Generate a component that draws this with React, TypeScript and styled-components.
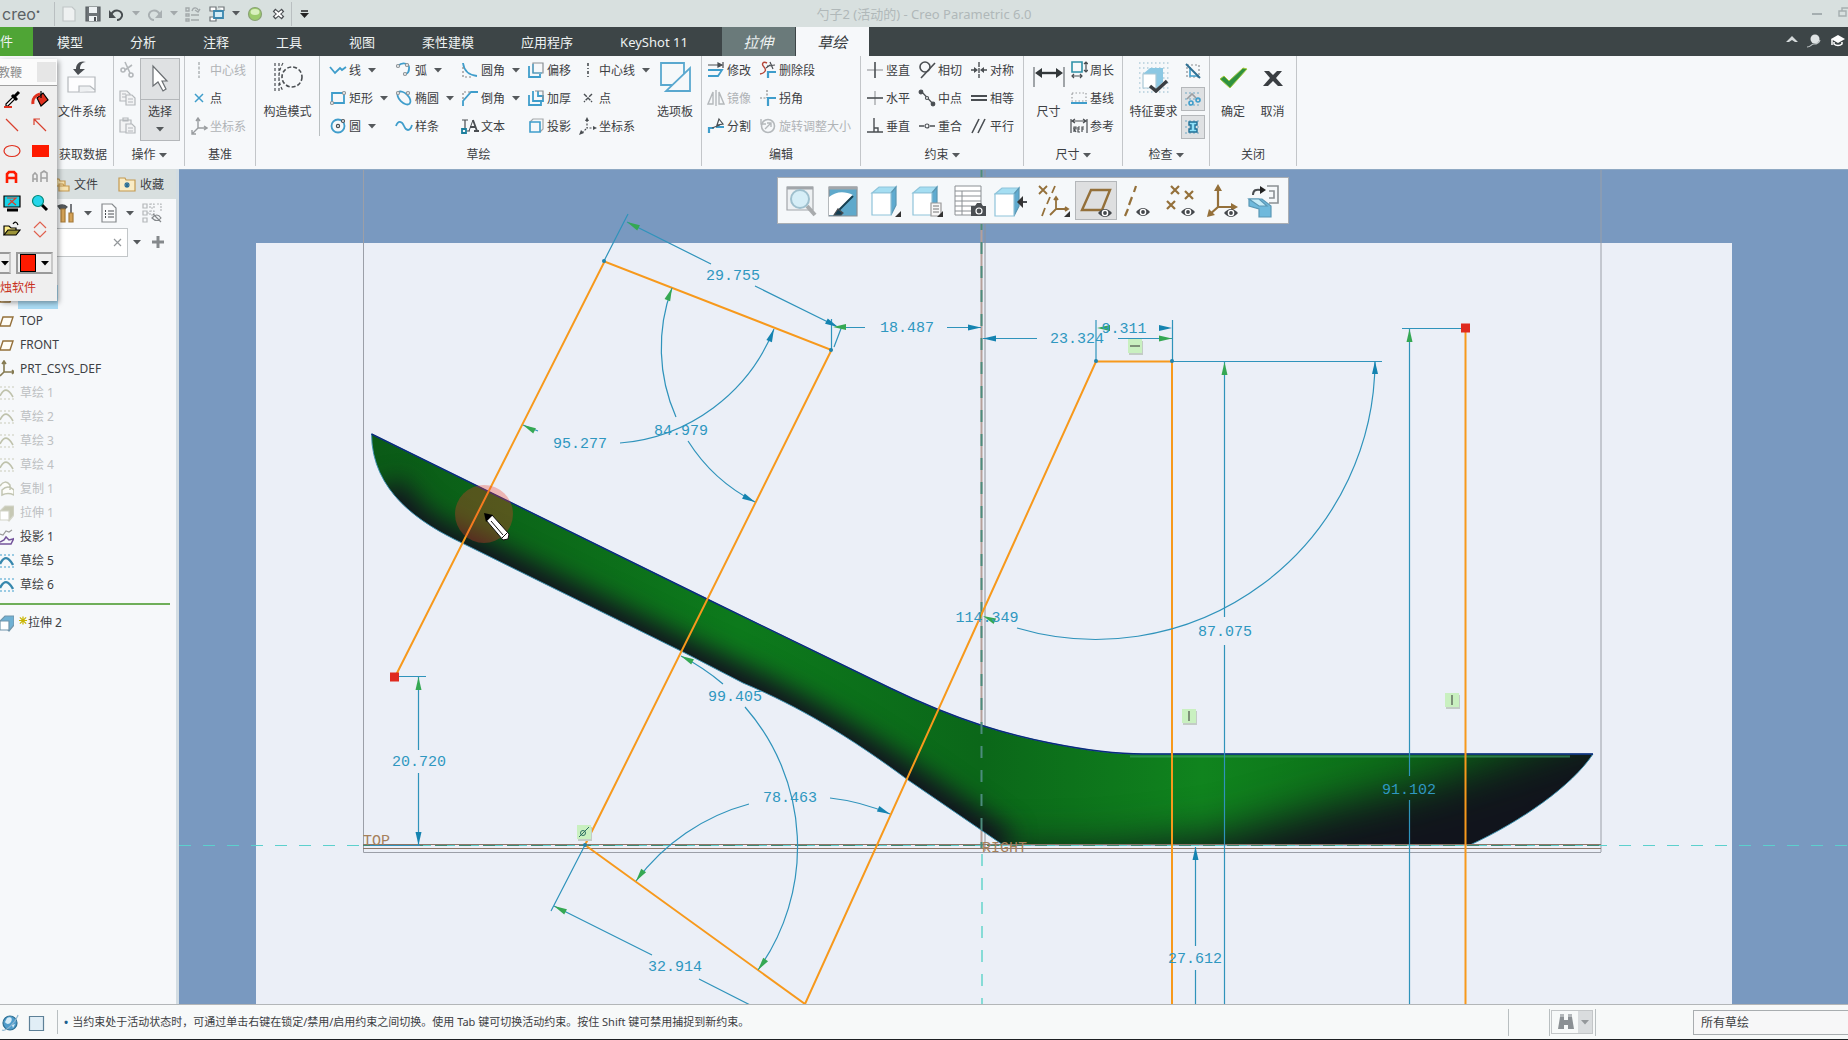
import React from "react";
import styled, { createGlobalStyle, css } from "styled-components";

const Global = createGlobalStyle`
  * { box-sizing: border-box; }
  body { margin: 0; overflow: hidden; }
  body, button, input, select {
    font-family: "Noto Sans", "Noto Sans CJK SC", sans-serif;
    font-size: 12px;
    color: #3d4043;
  }
  button { border: 0; padding: 0; background: none; }
`;

const INK = "#4a4e52";
const BLUE = "#3f9dcb";
const PALE = "#b4b8bb";
const GOLD = "#94703a";

/* ---------- shell ---------- */

const Shell = styled.div`
  display: flex;
  flex-direction: column;
  height: 100vh;
  overflow: hidden;
  background: #f6f8fa;
`;

const TitleBar = styled.header`
  display: grid;
  grid-template-columns: 1fr auto 1fr;
  align-items: center;
  flex: none;
  height: 27px;
  background: #d8e0df;
`;

const QuickBar = styled.div`
  display: flex;
  align-items: center;
  height: 27px;
`;

const Brand = styled.span`
  width: 54px;
  padding-left: 2px;
  font-family: Inter, sans-serif;
  font-size: 16px;
  line-height: 20px;
  color: #5b6265;
  sup { font-size: 8px; line-height: 8px; }
`;

const QuickButton = styled.button<{ $w?: number }>`
  display: flex;
  align-items: center;
  justify-content: center;
  width: ${(p) => p.$w ?? 24}px;
  height: 24px;
`;

const Rule = styled.span<{ $h?: number; $after?: number }>`
  flex: none;
  width: 1px;
  height: ${(p) => p.$h ?? 24}px;
  margin-right: ${(p) => p.$after ?? 0}px;
  background: #b9bfc1;
`;

const WindowTitle = styled.h1`
  margin: 0;
  font-size: 13px;
  line-height: 20px;
  font-weight: 400;
  color: #b0b8b9;
`;

const WindowButtons = styled.div`
  display: flex;
  justify-content: flex-end;
  gap: 16px;
  overflow: hidden;
`;

/* ---------- tabs ---------- */

const TabBar = styled.nav`
  display: flex;
  align-items: stretch;
  flex: none;
  gap: 1px;
  height: 29px;
  background: #3d4547;
`;

const Tab = styled.button<{ $kind?: "file" | "context" | "active" }>`
  flex: none;
  padding: 0 23px;
  font-size: 13px;
  line-height: 20px;
  white-space: nowrap;
  color: #eef2f2;
  ${(p) =>
    p.$kind === "file" &&
    css`
      display: flex;
      justify-content: flex-end;
      width: 33px;
      padding: 4px 20px 0 0;
      overflow: hidden;
      background: #4fa535;
    `}
  ${(p) =>
    p.$kind === "context" &&
    css`
      width: 73px;
      padding: 0;
      margin-left: 10px;
      font-size: 15px;
      font-style: italic;
      background: #6a7a7a;
    `}
  ${(p) =>
    p.$kind === "active" &&
    css`
      width: 73px;
      padding: 0;
      font-size: 15px;
      font-style: italic;
      color: #33383a;
      background: #f6f8fa;
    `}
`;

const TabTools = styled.div`
  display: flex;
  align-items: center;
  gap: 8px;
  margin-left: auto;
  padding-right: 2px;
`;

/* ---------- ribbon ---------- */

const Ribbon = styled.section`
  display: flex;
  flex: none;
  height: 113px;
  background: #f6f8fa;
`;

const Group = styled.div<{ $w: number }>`
  display: flex;
  flex-direction: column;
  flex: none;
  width: ${(p) => p.$w}px;
  height: 110px;
  border-right: 1px solid #c3c6c9;
`;

const GroupBody = styled.div<{ $pad?: number; $end?: boolean }>`
  display: flex;
  flex: none;
  justify-content: ${(p) => (p.$end ? "flex-end" : "flex-start")};
  height: 88px;
  padding-left: ${(p) => p.$pad ?? 5}px;
`;

const GroupName = styled.div<{ $end?: boolean }>`
  display: flex;
  align-items: center;
  justify-content: ${(p) => (p.$end ? "flex-end" : "center")};
  gap: 3px;
  height: 22px;
  line-height: 20px;
  padding-right: ${(p) => (p.$end ? 6 : 0)}px;
`;

const Column = styled.div<{ $w?: number }>`
  display: grid;
  grid-template-rows: repeat(3, 28px);
  width: ${(p) => (p.$w ? p.$w + "px" : "auto")};
`;

const Tool = styled.button<{ $off?: boolean }>`
  display: flex;
  align-items: center;
  gap: 2px;
  white-space: nowrap;
  color: ${(p) => (p.$off ? "#b0b3b6" : "#3d4043")};
  svg + span + svg { margin-left: 5px; }
`;

const BigTool = styled.button<{ $w: number }>`
  display: flex;
  flex-direction: column;
  align-items: center;
  width: ${(p) => p.$w}px;
  padding-top: 5px;
  gap: 9px;
  white-space: nowrap;
  line-height: 20px;
`;

const SelectTool = styled.div`
  display: flex;
  flex-direction: column;
  width: 40px;
  height: 83px;
  margin-top: 2px;
  border: 1px solid #b4b7ba;
  background: #dfe1e3;
  button {
    display: flex;
    flex-direction: column;
    align-items: center;
    justify-content: center;
    height: 40px;
    line-height: 20px;
  }
  button + button {
    justify-content: flex-start;
    gap: 5px;
    border-top: 1px solid #b4b7ba;
    padding-top: 2px;
  }
`;

const Toggle = styled.button<{ $on?: boolean }>`
  display: flex;
  align-items: center;
  justify-content: center;
  width: 24px;
  height: 24px;
  margin-top: 3px;
  border: 1px solid ${(p) => (p.$on ? "#b4b7ba" : "transparent")};
  background: ${(p) => (p.$on ? "#dfe1e3" : "transparent")};
`;

/* ---------- workspace ---------- */

const Work = styled.main`
  display: flex;
  flex: 1;
  min-height: 0;
`;

const Side = styled.aside`
  flex: none;
  width: 179px;
  border-right: 3px solid #d3dde3;
  background: #f6f8fa;
`;

const SideTabs = styled.div`
  display: flex;
  align-items: center;
  gap: 6px;
  height: 30px;
  padding-left: 54px;
  background: #d8dfdf;
  button { display: flex; align-items: center; gap: 4px; width: 58px; }
`;

const SideTools = styled.div`
  display: flex;
  align-items: center;
  gap: 8px;
  height: 28px;
  padding-left: 56px;
`;

const SearchRow = styled.label`
  display: flex;
  align-items: center;
  height: 30px;
`;

const SearchBox = styled.span`
  display: flex;
  align-items: center;
  width: 128px;
  height: 29px;
  padding-right: 5px;
  margin-right: 5px;
  border: 1px solid #c2c6c8;
  background: #fff;
  input { flex: 1; min-width: 0; border: 0; outline: 0; background: none; }
`;

const Tree = styled.ul`
  margin: 28px 0 0;
  padding: 0;
  list-style: none;
`;

const Node = styled.li<{ $off?: boolean; $picked?: boolean }>`
  display: flex;
  align-items: center;
  height: 24px;
  line-height: 20px;
  color: ${(p) => (p.$off ? "#bdc0c2" : "#3d4043")};
  svg { flex: none; width: 14px; margin-right: 4px; }
  span { padding: 0 2px; }
  ${(p) =>
    p.$picked &&
    css`
      span { width: 40px; height: 24px; background: #a9daf3; }
    `}
`;

const NewNode = styled(Node)`
  svg { margin-right: 5px; }
  svg + svg { width: 8px; margin: 0 0 6px; }
  span { padding: 0 1px; }
`;

const InsertBar = styled.li`
  width: 170px;
  height: 2px;
  margin: 6px 0;
  background: #6fae59;
`;

const Canvas = styled.section`
  position: relative;
  flex: 1;
  min-width: 0;
  overflow: hidden;
  border-top: 1px solid #8fa9c3;
  background: #7999c0;
`;

const Drawing = styled.svg`
  display: block;
  width: 100%;
  height: 100%;
  text { font-family: "Liberation Mono", monospace; font-size: 15px; }
`;

const ViewBar = styled.div`
  position: absolute;
  top: 7px;
  left: 598px;
  display: flex;
  align-items: center;
  width: 512px;
  height: 47px;
  padding: 0 2px;
  border: 1px solid #a9aeb4;
  background: #f5f8fa;
`;

const ViewButton = styled.button<{ $on?: boolean }>`
  display: flex;
  align-items: center;
  justify-content: center;
  flex: 1;
  height: 39px;
  border: 1px solid ${(p) => (p.$on ? "#b4b7ba" : "transparent")};
  background: ${(p) => (p.$on ? "#dedfe0" : "transparent")};
`;

/* ---------- pointer palette ---------- */

const Palette = styled.aside`
  position: absolute;
  top: 59px;
  left: 0;
  width: 57px;
  height: 242px;
  overflow: hidden;
  background: #efefef;
  box-shadow: 2px 2px 5px rgba(0, 0, 0, 0.35);
`;

const PaletteHead = styled.div`
  display: flex;
  align-items: center;
  justify-content: space-between;
  height: 27px;
  padding-right: 1px;
  border-bottom: 1px solid #a0a0a0;
  background: #fbfbfb;
  color: #8d8d8d;
  span { display: flex; justify-content: flex-end; width: 22px; overflow: hidden; white-space: nowrap; }
  i { width: 19px; height: 20px; background: #e6e6e6; }
`;

const PaletteGrid = styled.div`
  display: grid;
  grid-template-columns: 28px 28px;
  grid-auto-rows: 26px;
  justify-items: center;
  align-items: center;
  margin-left: -2px;
`;

const PaletteCombo = styled.div`
  display: flex;
  justify-content: space-between;
  height: 22px;
  margin: 10px 4px 0 0;
  button {
    display: flex;
    align-items: center;
    justify-content: space-around;
    width: 37px;
    border: 2px solid #9a9a9a;
    border-right-color: #c8c8c8;
  }
  button:first-child { width: 11px; border-left: 0; }
`;

const Swatch = styled.i`
  width: 16px;
  height: 18px;
  border: 1px solid #000;
  background: #fe1a00;
`;

const PaletteName = styled.div`
  display: flex;
  justify-content: flex-end;
  width: 36px;
  overflow: hidden;
  white-space: nowrap;
  line-height: 28px;
  color: #c8321e;
`;

/* ---------- status ---------- */

const Status = styled.footer`
  display: flex;
  align-items: center;
  flex: none;
  height: 36px;
  border-top: 1px solid #b3b6b8;
  border-bottom: 1px solid #1d2023;
  background: #f7f9f9;
  > svg { flex: none; }
`;

const Message = styled.p`
  flex: 1;
  min-width: 0;
  margin: 0;
  padding-left: 6px;
  font-size: 11px;
  line-height: 20px;
  white-space: nowrap;
  overflow: hidden;
  b { margin-right: 4px; color: #1c5f8f; }
`;

const Finder = styled.button`
  display: flex;
  align-items: center;
  width: 42px;
  height: 24px;
  margin: 0 2px 0 1px;
  padding-left: 5px;
  border: 1px solid #c3c6c8;
  justify-content: space-between;
  span {
    display: flex;
    align-items: center;
    justify-content: center;
    width: 14px;
    height: 22px;
    background: #d9dcde;
  }
`;

const Filter = styled.select`
  appearance: none;
  width: 155px;
  height: 25px;
  margin-left: 97px;
  padding: 0 7px;
  border: 1px solid #a9adb0;
  border-right: 0;
  border-radius: 0;
  background: #f7f7f8;
`;

/* ---------- icons ---------- */

const Svg = ({ s = 18, w, h, children }: any) => (
  <svg
    width={w ?? s}
    height={h ?? s}
    viewBox={`0 0 ${w ?? s} ${h ?? s}`}
    fill="none"
    stroke={INK}
    strokeWidth="1.2"
    aria-hidden="true"
  >
    {children}
  </svg>
);

const Caret = ({ c = "#55595c" }: { c?: string }) => (
  <Svg w={8} h={5}>
    <path d="M0 0h8L4 4.5z" fill={c} stroke="none" />
  </Svg>
);

const I: Record<string, React.ReactNode> = {
  cut: <Svg><g stroke={PALE} strokeWidth="1.6"><path d="M6 1l5 11M13 4L6 9" /><circle cx="12" cy="14" r="2" /><circle cx="4" cy="9" r="2" /></g></Svg>,
  copy: <Svg><g stroke={PALE} fill="#f2f3f4"><path d="M1 2h7l3 3v7H1zM3 5h4M3 8h5" /><path d="M7 6h6l3 3v7H7zM9 10h5M9 13h5" /></g></Svg>,
  paste: <Svg><g stroke={PALE} fill="#f2f3f4"><path d="M1 3h11v12H1zM4 1h5v3H4z" /><path d="M7 7h6l3 3v6H7zM9 11h5M9 14h5" /></g></Svg>,
  dline: <Svg><path d="M9 1v16" stroke={PALE} strokeWidth="1.6" strokeDasharray="3 1.5" /></Svg>,
  dpoint: <Svg><path d="M5 5l8 8M13 5l-8 8" stroke={BLUE} strokeWidth="1.5" /></Svg>,
  dcsys: <Svg><path d="M8 1v10h9M8 11l-6 6M6 4l2-3 2 3M14 9l3 2-3 2M2 13v4h4" stroke="#9a9da0" strokeWidth="1.4" /></Svg>,
  line: <Svg><path d="M1 6l5 6 5-5 2 2 4-3" stroke={BLUE} strokeWidth="1.8" /></Svg>,
  rect: <Svg><path d="M3 4h12v10H3z" stroke={BLUE} strokeWidth="1.8" /><g fill="#fff" stroke="#8b9094"><circle cx="15" cy="4" r="1.5" /><circle cx="3" cy="14" r="1.5" /></g></Svg>,
  circle: <Svg><circle cx="9" cy="9" r="6.5" stroke={BLUE} strokeWidth="1.8" /><circle cx="9" cy="9" r="1.6" /><circle cx="14" cy="4" r="1.5" fill="#fff" /></Svg>,
  arc: <Svg><path d="M3 5c5-5 12-2 11 3 0 3-1 4-3 5" stroke={BLUE} strokeWidth="1.8" /><g fill="#fff" stroke="#8b9094"><circle cx="3" cy="5" r="1.5" /><circle cx="12" cy="4" r="1.5" /><circle cx="10" cy="13" r="1.5" /></g></Svg>,
  ellipse: <Svg><ellipse cx="9" cy="9" rx="8" ry="4.5" transform="rotate(45 9 9)" stroke={BLUE} strokeWidth="1.8" /><g fill="#fff" stroke="#8b9094"><circle cx="3" cy="4" r="1.5" /><circle cx="13" cy="4" r="1.5" /></g></Svg>,
  spline: <Svg><path d="M1 9c2-6 6-5 8 0s6 6 8-1" stroke={BLUE} strokeWidth="1.8" /></Svg>,
  fillet: <Svg><path d="M2 2c1 8 5 12 14 13" stroke={BLUE} strokeWidth="1.8" /><path d="M2 6v10h9" strokeDasharray="2 2" stroke="#888" /></Svg>,
  chamfer: <Svg><path d="M2 17v-5l8-9h7" stroke={BLUE} strokeWidth="1.8" /><path d="M2 10V3h7" strokeDasharray="2 2" stroke="#888" /></Svg>,
  text: <Svg><path d="M1 3h6M4 3v8" /><path d="M1 12h4v4H1z" stroke="#1d7f9d" strokeWidth="1.8" /><path d="M6 14h3M8 14l4-11" strokeWidth="1" /><path d="M12 3l4 11M9 10h5M13 14h5" strokeWidth="1.8" /></Svg>,
  offset: <Svg><path d="M2 5v11h11v-3" stroke={BLUE} strokeWidth="1.8" /><path d="M6 2h10v10H6z" stroke="#8b9094" /><path d="M6 3v9h9" stroke={BLUE} /></Svg>,
  thicken: <Svg><path d="M2 6v10h12v-4M6 2v10h10V7h-5V2" stroke={BLUE} strokeWidth="1.8" /><path d="M8 2h8v8" stroke="#8b9094" /></Svg>,
  project: <Svg><path d="M3 5l3-3h10v10l-3 3" stroke="#a3a7aa" /><path d="M3 5v10h10V5z" stroke={BLUE} strokeWidth="1.6" /></Svg>,
  cline: <Svg><path d="M9 2v14" strokeWidth="1.6" strokeDasharray="3 2 1 2" /></Svg>,
  point: <Svg><path d="M5 5l8 8M13 5l-8 8" strokeWidth="1.4" strokeDasharray="4 1" /></Svg>,
  csys: <Svg><path d="M8 3v8h8M7 12l-4 4" strokeDasharray="2 1.5" /><path d="M8 0l2 4H6zM18 11l-4-2v4zM0 18l2-5 3 3z" fill={INK} stroke="none" /></Svg>,
  modify: <Svg><path d="M1 4h13M16 1v6" /><path d="M15 4l-4-2v4z" fill={INK} /><path d="M1 9h14l-4 6H1" stroke={BLUE} strokeWidth="1.8" /></Svg>,
  mirror: <Svg><path d="M6 3v12H1zM12 3v12h5zM9 1v16" stroke={PALE} strokeWidth="1.4" /></Svg>,
  split: <Svg><path d="M2 16v-5h5M9 10h8" stroke={BLUE} strokeWidth="2.2" /><path d="M5 11l8-3M12 2l4 5-6 1z" /></Svg>,
  trim: <Svg><path d="M8 2C4 0 2 3 5 6s1 6-4 7" stroke="#b5473a" strokeWidth="1.4" /><path d="M9 17v-6h8" stroke={BLUE} strokeWidth="2.2" /><path d="M8 5l8-1M11 1l3 7M7 7l4-3" /></Svg>,
  corner: <Svg><path d="M8 1v8M1 9h6" strokeDasharray="2 1.5" stroke="#888" /><path d="M9 17V9h8" stroke={BLUE} strokeWidth="2.2" /></Svg>,
  rotate: <Svg><circle cx="9" cy="9" r="6.5" stroke={PALE} strokeWidth="1.6" /><path d="M2 2v5h5M6 12l6-6M12 10V6H8" stroke={PALE} strokeWidth="1.4" /></Svg>,
  vert: <Svg><path d="M1 9h16" stroke="#9a9da0" /><path d="M9 1v16" strokeWidth="1.6" /></Svg>,
  horiz: <Svg><path d="M9 2v14" stroke="#9a9da0" /><path d="M1 9h16" strokeWidth="1.6" /></Svg>,
  perp: <Svg><path d="M8 1v14M1 15h16M8 11h4v4" strokeWidth="1.4" /></Svg>,
  tangent: <Svg><circle cx="7" cy="6" r="5" strokeWidth="1.6" /><path d="M17 2L3 17" strokeWidth="1.6" /></Svg>,
  mid: <Svg><path d="M3 2l13 14" /><g fill={INK}><circle cx="3" cy="3" r="1.8" /><circle cx="15" cy="15" r="1.8" /></g><circle cx="9" cy="9" r="1.5" fill="#fff" /></Svg>,
  coin: <Svg><path d="M1 9h5M12 9h5" strokeWidth="1.6" /><circle cx="9" cy="9" r="2" /></Svg>,
  symm: <Svg><path d="M9 1v16M1 9h5M17 9h-5" strokeWidth="1.4" strokeDasharray="5 1" /><path d="M8 9L4 6v6zM10 9l4-3v6z" fill={INK} stroke="none" /></Svg>,
  equal: <Svg><path d="M1 7h16M1 11h16" strokeWidth="1.8" /></Svg>,
  para: <Svg><path d="M2 16L9 2M8 16l7-14" strokeWidth="1.6" /></Svg>,
  perim: <Svg><path d="M2 1h10v10H2z" stroke="#2e90a8" strokeWidth="1.6" /><path d="M16 1v10M14 3l2-2 2 2M14 9l2 2 2-2M2 15h10M4 13l-2 2 2 2M10 13l2 2-2 2" /></Svg>,
  base: <Svg><path d="M2 4h14v8H2z" stroke="#9a9da0" strokeDasharray="1.5 2" /><path d="M1 14h16" stroke={BLUE} strokeWidth="2" /></Svg>,
  ref: <Svg><path d="M1 2v14M17 2v14M2 4h14M5 2L2 4l3 2M13 2l3 2-3 2" /><path d="M4 15v-5h2v2H4l2 3M8 10v5h2M8 10h2M8 12h2M12 15v-5h2M12 12h2" /></Svg>,
  plane: <Svg w={14} h={18}><path d="M3 5h10l-3 9H0z" stroke={GOLD} strokeWidth="1.4" fill="#fffdf6" /></Svg>,
};

const Axes = () => (
  <Svg w={14} h={18}>
    <path d="M4 1v11h10M4 12l-4 4M2 4l2-3 2 3M12 10l2 2-2 2" stroke="#857a52" strokeWidth="1.6" />
  </Svg>
);

const SketchMark = ({ off }: { off?: boolean }) => (
  <Svg w={14} h={18}>
    <path d="M0 3h14M0 15h14" stroke={off ? "#c9cbb9" : BLUE} strokeDasharray="2 2" />
    <path d="M0 12c4-8 8-8 13 1" stroke={off ? "#bfc2ac" : "#3787ad"} strokeWidth={off ? 1.6 : 2.4} />
  </Svg>
);

const Solid = ({ off }: { off?: boolean }) => (
  <Svg w={14} h={18}>
    <path d="M0 7l5-5h9v9l-5 6z" fill={off ? "#c6c8b4" : "#6fb1d4"} stroke={off ? "#d4d5ca" : "#7296ab"} />
    <path d="M0 7h9v9H0z" fill="#fff" stroke={off ? "#d4d5ca" : "#7296ab"} />
  </Svg>
);

const Cube = () => (
  <>
    <path d="M2 8l7-6h17l-5 6z" fill="#a5def2" stroke="#8fc4da" />
    <path d="M21 8l5-6v18l-5 10z" fill="#5fabd0" stroke="#5a97b3" />
    <path d="M2 8h19v22H2z" fill="#fff" stroke="#8fc4da" />
  </>
);

const Eye = ({ x, y }: { x: number; y: number }) => (
  <g transform={`translate(${x} ${y})`}>
    <path d="M-7 0Q0-8 7 0Q0 8-7 0z" fill="#44484c" stroke="none" />
    <circle r="2.6" fill="#44484c" stroke="#fff" strokeWidth="1.4" />
  </g>
);

/* ---------- ribbon data ---------- */

type Cell = [string, string, boolean?, boolean?];

const Tools = ({ w, items }: { w?: number; items: Cell[] }) => (
  <Column $w={w}>
    {items.map(([icon, label, menu, off]) => (
      <Tool key={label + icon} $off={off}>
        {I[icon]}
        <span>{label}</span>
        {menu && <Caret />}
      </Tool>
    ))}
  </Column>
);

const TREE: [string, React.ReactNode, boolean?][] = [
  ["TOP", I.plane],
  ["FRONT", I.plane],
  ["PRT_CSYS_DEF", <Axes />],
  ["草绘 1", <SketchMark off />, true],
  ["草绘 2", <SketchMark off />, true],
  ["草绘 3", <SketchMark off />, true],
  ["草绘 4", <SketchMark off />, true],
  ["复制 1", <Svg w={14} h={18}><path d="M0 6c3-5 7-5 10-1v5M2 15v-5c4-4 8-4 12 0v5c-4-2-8-2-12 0z" stroke="#c2c5b2" fill="#fdfdfa" strokeWidth="1.5" /></Svg>, true],
  ["拉伸 1", <Solid off />, true],
  ["投影 1", <Svg w={14} h={18}><path d="M0 6l3 1 3-4 3 1 3-2" stroke="#999" /><path d="M0 14l4-2 2-3 3 3 4-1M0 16h11l3-6" stroke="#74549b" strokeWidth="1.5" /></Svg>],
  ["草绘 5", <SketchMark />],
  ["草绘 6", <SketchMark />],
];

/* ---------- drawing ---------- */

const Arrow = ({ x, y, a, g }: { x: number; y: number; a: number; g?: boolean }) => (
  <path
    d="M0 0l-13-3v6z"
    transform={`translate(${x} ${y}) rotate(${a})`}
    fill={g ? "#35a853" : "#1583b0"}
    stroke="none"
  />
);

const DIMS: [string, number, number][] = [
  ["29.755", 733, 275],
  ["18.487", 907, 327],
  ["23.324", 1077, 338],
  ["9.311", 1124, 328],
  ["84.979", 681, 430],
  ["95.277", 580, 443],
  ["99.405", 735, 696],
  ["78.463", 790, 797],
  ["114.349", 987, 617],
  ["20.720", 419, 761],
  ["87.075", 1225, 631],
  ["91.102", 1409, 789],
  ["27.612", 1195, 958],
  ["32.914", 675, 966],
];

const TOP_EDGE =
  "M371.5 434L707 599L890 688C960 722 1010 735 1050 743C1090 751 1115 754 1143 754H1593";

const OUTLINE =
  TOP_EDGE +
  "C1572 786 1520 822 1470 845H1003L908 780C850 737 800 707 743 683L685 653L462 543C420 523 372 492 371.5 434z";

const Badge = ({ x, y, children }: any) => (
  <g transform={`translate(${x} ${y})`}>
    <rect x="-6" y="-5" width="14" height="14" fill="#c3ccc6" stroke="none" />
    <rect x="-7" y="-7" width="14" height="14" fill="#c9f0c0" stroke="none" />
    {children}
  </g>
);

const Model = () => (
  <Drawing role="img" aria-label="草绘视图">
    <defs>
      <clipPath id="body"><path d={OUTLINE} /></clipPath>
      <filter id="handleShade" x="-20%" y="-50%" width="140%" height="200%" colorInterpolationFilters="sRGB"><feGaussianBlur stdDeviation="12" /></filter>
      <filter id="bowlShade" x="-20%" y="-80%" width="140%" height="260%" colorInterpolationFilters="sRGB"><feGaussianBlur stdDeviation="22" /></filter>
      <linearGradient id="base" gradientUnits="userSpaceOnUse" x1="371" y1="0" x2="1593" y2="0">
        <stop offset="0" stopColor="#0b5a17" />
        <stop offset=".3" stopColor="#0d7a1c" />
        <stop offset=".5" stopColor="#0b6719" />
        <stop offset=".68" stopColor="#10841e" />
        <stop offset=".82" stopColor="#0d7019" />
        <stop offset="1" stopColor="#0a4a14" />
      </linearGradient>
    </defs>
    <g transform="translate(-179 -170)">
      <rect x="256" y="243" width="1476" height="800" fill="#ebeff7" />
      <g fill="none" stroke="#9b9fa8" strokeWidth="1">
        <path d="M363.5 170V852.5H1601M1601 170V852" />
        <path d="M985 170V851" stroke="#8f9299" />
        <path d="M981.5 170V848" stroke="#b5a09a" strokeWidth="2" />
      </g>
      <g clipPath="url(#body)">
        <path d={OUTLINE} fill="url(#base)" />
        <g filter="url(#handleShade)">
          <path d="M365 500C395 550 430 562 462 574L685 684C750 712 820 751 905 809L990 868" fill="none" stroke="#12131f" strokeWidth="84" />
        </g>
        <g filter="url(#bowlShade)">
          <path d="M960 852L1100 850L1220 836L1330 806L1430 784L1520 756L1660 710V980H960z" fill="#11141c" />
        </g>
      </g>
      <path d={OUTLINE} fill="none" stroke="#3f8fae" strokeWidth="1" />
      <path d={TOP_EDGE} fill="none" stroke="#0b2a7c" strokeWidth="1.5" />
      <path d="M1130 756.5H1570" stroke="#3fa36a" strokeWidth="2" opacity=".6" />
      <g fill="none">
        <path d="M363 844.5H1601M363 848.5H1601" stroke="#8d7668" />
        <path d="M179 845.5H1848" stroke="#5cd0cd" strokeDasharray="12 12" />
        <path d="M363 845.5H1601" stroke="#3c8c78" strokeDasharray="12 12" strokeWidth="1" />
        <path d="M981.5 170V848" stroke="#4c8c7c" strokeWidth="2" strokeDasharray="12 12" />
        <path d="M982 854V1010" stroke="#86dbd6" strokeWidth="2" strokeDasharray="12 12" />
      </g>
      <g fill="none" stroke="#f7991c" strokeWidth="2">
        <path d="M395 677L604.5 261.5L831.5 350L585 845L805 1004L1096 361.5H1172V1010M1465.5 328V1010" />
      </g>
      <g fill="none" stroke="#2f93bb" strokeWidth="1.2">
        <path d="M604 261L628 214M627 222L711 264M755 286L836 326M831.5 350V319M834 347L842 326" />
        <path d="M837 327.5H865M947 327.5H981M983 338.5H1037M1118 338.5H1172" />
        <path d="M1096 361V320M1172.5 361V320M1172 361.5H1382" />
        <path d="M774 329A182 182 0 0 1 620 443M538 431L523 425" />
        <path d="M672 288A171 171 0 0 0 676 417M688 441A171 171 0 0 0 755 502" />
        <path d="M1375 361A279 279 0 0 1 1017 628" />
        <path d="M681 656A212 212 0 0 1 723 684M745 707A212 212 0 0 1 758 970" />
        <path d="M890 814A208 208 0 0 0 830 798M749 804A208 208 0 0 0 636 881" />
        <path d="M395 676.5H426M418.5 677V750M418.5 773V845M370 845.5H420" />
        <path d="M1224.5 361V617M1224.5 645V1010M1402 328.5H1465M1409.5 328V776M1409.5 800V1010M1195.5 847V946M1195.5 970V1010" />
        <path d="M585 845L551 911M554 906L652 955M699 979L760 1010" />
      </g>
      <Arrow x={627} y={222} a={-153} g /><Arrow x={838} y={327} a={27} />
      <Arrow x={833} y={327} a={180} g /><Arrow x={981} y={327.5} a={0} />
      <Arrow x={983} y={338.5} a={180} /><Arrow x={1172} y={338.5} a={0} g />
      <Arrow x={1097} y={328} a={180} g /><Arrow x={1172} y={328} a={0} />
      <Arrow x={774} y={329} a={-68} /><Arrow x={523} y={425} a={-153} g />
      <Arrow x={672} y={288} a={-69} g /><Arrow x={755} y={502} a={27} />
      <Arrow x={1375} y={361} a={-90} /><Arrow x={983} y={616} a={-156} g />
      <Arrow x={681} y={656} a={-153} g /><Arrow x={758} y={970} a={126} g />
      <Arrow x={890} y={814} a={24} /><Arrow x={636} y={881} a={126} g />
      <Arrow x={418.5} y={677} a={-90} g /><Arrow x={418.5} y={845} a={90} />
      <Arrow x={1224.5} y={362} a={-90} g /><Arrow x={1409.5} y={329} a={-90} g />
      <Arrow x={1195.5} y={847} a={-90} /><Arrow x={554} y={906} a={-153} g />
      <g fill="#1f84ad">
        <circle cx="604" cy="261" r="2" /><circle cx="831" cy="350" r="2" />
        <circle cx="585" cy="845" r="2" /><circle cx="1096" cy="361" r="2" /><circle cx="1172" cy="361" r="2" />
      </g>
      <path d="M390 672.5h9v9h-9zM1461 323.5h9v9h-9z" fill="#df2a1f" />
      <g fill="#2f97c0" textAnchor="middle">
        {DIMS.map(([t, x, y]) => (
          <text key={t} x={x} y={y + 5}>{t}</text>
        ))}
      </g>
      <g fill="#a5805c">
        <text x="363" y="845">TOP</text>
        <text x="982" y="852">RIGHT</text>
      </g>
      <Badge x={1135} y={346}><path d="M-5 0H5" stroke="#333" /></Badge>
      <Badge x={1189} y={716}><path d="M0-5V5" stroke="#333" /></Badge>
      <Badge x={1452} y={700}><path d="M0-5V5" stroke="#333" /></Badge>
      <Badge x={584} y={832}><circle cx="-1" cy="1" r="2.5" fill="none" stroke="#2d6f63" /><path d="M-5 5L5-5" stroke="#2d6f63" /></Badge>
      <circle cx="484" cy="514" r="29" fill="#ee3a28" opacity=".32" />
      <path d="M486 520l6-5 17 19-1 5-5 1z" fill="#fff" stroke="#111" />
      <path d="M484 513l9 2-7 7z" fill="#000" />
      <path d="M491 521l12 14M502 538l5-5" stroke="#111" />
    </g>
  </Drawing>
);

/* ---------- view bar ---------- */

const Tri = () => <path d="M33 34h-6l6-6z" fill="#333" stroke="none" />;

const VIEWS: [string, React.ReactNode][] = [
  ["重新调整", <><path d="M3 4h26v23H3z" fill="#eef1f3" stroke="#a2a6aa" /><path d="M3 5h26" strokeWidth="3" stroke="#a2a6aa" /><path d="M23 23l8 9" stroke="#a8abad" strokeWidth="4" /><circle cx="16" cy="16" r="9" fill="#d6eef7" stroke="#9fc0ce" strokeWidth="2" /></>],
  ["重画", <><path d="M3 4h28v29H3z" fill="#5fa9cb" stroke="#8b9094" /><path d="M3 14C10 8 19 8 27 12L8 32H3z" fill="#fff" stroke="none" /><path d="M3 5h28" stroke="#a2a6aa" strokeWidth="3" /><path d="M27 13L13 27" strokeWidth="2" stroke="#173f50" /><path d="M8 32l4-6 5 4-2 2z" fill="#123f54" /></>],
  ["显示样式", <><g transform="translate(2 2)"><Cube /></g><Tri /></>],
  ["已保存方向", <><g transform="translate(1 2)"><Cube /></g><path d="M21 20h10v13H21z" fill="#f7f7f7" stroke="#999" /><path d="M23 23h6M23 26h6M23 29h6" strokeWidth="1" stroke="#777" /><Tri /></>],
  ["视图管理器", <><path d="M3 3h26v29H3zM3 8h26M3 13h26M3 18h26M3 23h26M3 28h26M10 8v24" stroke="#8b9094" strokeWidth="1" fill="#fff" /><path d="M19 23h4l2-3h4l2 3h3v10H19z" fill="#4b4f53" stroke="none" /><circle cx="27" cy="28" r="3" stroke="#fff" /></>],
  ["透视图", <><g transform="translate(-1 3)"><Cube /></g><path d="M33 19h-6" strokeWidth="2" /><path d="M23 19l6-6v12z" fill="#333" stroke="none" /></>],
  ["基准显示", <><path d="M2 3l8 8M10 3l-8 8M18 3l-3 7M13 14l-3 7M8 25l-3 8M19 14v12h12M19 26l-6 6M17 17l2-3 2 3M28 24l3 2-3 2" stroke={GOLD} strokeWidth="1.8" /><Tri /></>],
  ["平面显示", <><path d="M12 7h19l-8 20H3z" stroke={GOLD} strokeWidth="2.4" /><Eye x={26} y={30} /></>],
  ["轴显示", <><path d="M15 3l-2 6M11 14l-3 8M7 26l-3 7" stroke={GOLD} strokeWidth="2.2" /><Eye x={22} y={29} /></>],
  ["点显示", <><path d="M8 3l8 8M16 3l-8 8M22 8l8 8M30 8l-8 8M4 18l8 8M12 18l-8 8" stroke={GOLD} strokeWidth="2.2" /><Eye x={25} y={29} /></>],
  ["坐标系显示", <><path d="M13 4v20h17M13 24l-9 8" stroke={GOLD} strokeWidth="2.2" /><path d="M13 1l4 7H9zM33 24l-7-4v8zM2 34l2-8 6 6z" fill={GOLD} stroke="none" /><Eye x={26} y={30} /></>],
  ["注释显示", <><path d="M20 3h11v17h-9M22 8h5v7h-5" stroke="#8b9094" strokeWidth="1.6" /><path d="M6 12c0-5 3-6 8-5" strokeWidth="2" /><path d="M19 7l-6-4v8z" fill="#222" stroke="none" /><path d="M2 16h13l9 7v11H12V26l-10-3z" fill="#6fb9dc" stroke="#5b98b5" /><path d="M2 16h10l8 7h-8z" fill="#c6ebf7" stroke="#5b98b5" /></>],
];

/* ---------- page ---------- */

const TABS = ["模型", "分析", "注释", "工具", "视图", "柔性建模", "应用程序", "KeyShot 11"];

export default function App() {
  return (
    <Shell>
      <Global />
      <TitleBar>
        <QuickBar>
          <Brand>creo<sup>•</sup></Brand>
          <Rule />
          <QuickButton $w={28} aria-label="新建"><Svg w={14} h={16}><path d="M1 1h9l3 3v11H1z" fill="#eef1f1" stroke="#c0c6c7" /></Svg></QuickButton>
          <QuickButton $w={20} aria-label="保存"><Svg s={16}><path d="M1 1h14v14H1z" fill="#6d7377" stroke="#5a6064" /><path d="M4 1h8v6H4zM4 10h8v5H4z" fill="#eef2f4" stroke="none" /><path d="M9 11h2v4H9z" fill="#4a4e52" stroke="none" /></Svg></QuickButton>
          <QuickButton $w={26} aria-label="撤消"><Svg s={16}><path d="M3 9c3-7 12-5 11 1-1 3-3 4-5 4" strokeWidth="2" stroke="#474d50" /><path d="M1 4v8h7z" fill="#474d50" stroke="none" /></Svg></QuickButton>
          <QuickButton $w={14} aria-label="撤消列表"><Caret c="#a3a9ab" /></QuickButton>
          <QuickButton aria-label="重做"><Svg s={16}><path d="M13 9C10 2 1 4 2 10c1 3 3 4 5 4" strokeWidth="2" stroke="#a9b0b2" /><path d="M15 4v8H8z" fill="#a9b0b2" stroke="none" /></Svg></QuickButton>
          <QuickButton $w={14} aria-label="重做列表"><Caret c="#a3a9ab" /></QuickButton>
          <QuickButton aria-label="重新生成"><Svg s={16}><path d="M1 2h3v3H1zM1 8h3v2H1zM1 13h3v2H1zM6 9h8M6 14h8M7 5c1-4 5-4 6-1M15 3l-2 3-3-2" stroke="#a3a9ab" strokeWidth="1.4" /></Svg></QuickButton>
          <QuickButton aria-label="窗口"><Svg s={16}><path d="M1 1h6v4H1zM9 1h6v4M1 11h6v4H1z" stroke="#6d7377" fill="#fff" /><path d="M5 5h9v7H5z" fill="#d3ecf7" stroke="#3b87ae" strokeWidth="1.8" /></Svg></QuickButton>
          <QuickButton $w={14} aria-label="窗口列表"><Caret /></QuickButton>
          <QuickButton aria-label="外观"><Svg s={16}><circle cx="8" cy="8" r="6.5" fill="#9ccb6b" stroke="#8aa376" /><ellipse cx="8" cy="6" rx="4.5" ry="3" fill="#d9f0bd" stroke="none" /></Svg></QuickButton>
          <QuickButton aria-label="关闭窗口"><Svg s={14}><path d="M2 3l9 8M11 3l-9 8" strokeWidth="4" /><path d="M3 4l7 6M10 4l-7 6" strokeWidth="2" stroke="#fff" /></Svg></QuickButton>
          <Rule />
          <QuickButton aria-label="自定义"><Svg w={9} h={8}><path d="M1 1h7" strokeWidth="1.5" stroke="#222" /><path d="M0 3h9L4.5 8z" fill="#222" stroke="none" /></Svg></QuickButton>
        </QuickBar>
        <WindowTitle>勺子2 (活动的) - Creo Parametric 6.0</WindowTitle>
        <WindowButtons>
          <button aria-label="最小化"><Svg w={10} h={12}><path d="M0 8h10" stroke="#a5aeb0" strokeWidth="2" /></Svg></button>
          <button aria-label="还原"><Svg w={10} h={12}><path d="M1 5h7v5H1zM4 5V2h8" stroke="#a5aeb0" strokeWidth="1.4" /></Svg></button>
        </WindowButtons>
      </TitleBar>

      <TabBar>
        <Tab $kind="file">文件</Tab>
        {TABS.map((t) => <Tab key={t}>{t}</Tab>)}
        <Tab $kind="context">拉伸</Tab>
        <Tab $kind="active">草绘</Tab>
        <TabTools>
          <button aria-label="最小化功能区"><Svg w={12} h={14}><path d="M0 9l6-6 6 6H9L6 7 3 9z" fill="#d5dadb" stroke="none" /></Svg></button>
          <button aria-label="搜索"><Svg s={16}><circle cx="9" cy="7" r="4.5" fill="#dfe3e4" stroke="none" /><path d="M1 15c4 0 4-3 7-3s5-1 6-4" stroke="#c0c6c7" /></Svg></button>
          <button aria-label="学习"><Svg s={16}><path d="M1 7l7-4 7 4-7 4z" fill="#fff" stroke="none" /><path d="M4 10v2c2 2 6 2 8 0v-2M2 7v6" stroke="#fff" strokeWidth="1.5" /></Svg></button>
        </TabTools>
      </TabBar>

      <Ribbon>
        <Group $w={114}>
          <GroupBody $end>
            <BigTool $w={62}>
              <Svg s={32}><path d="M2 16h27v15H2z" fill="#fdfdfe" stroke="#b4b8bb" /><path d="M13 31v-6h11l5 4" stroke="#b4b8bb" fill="#eef0f2" /><path d="M20 1c-5 0-6 4-6 7h5l-7 6-5-6h3c0-5 4-9 10-7z" fill="#4a4e52" stroke="none" /></Svg>
              文件系统
            </BigTool>
          </GroupBody>
          <GroupName $end>获取数据</GroupName>
        </Group>

        <Group $w={71}>
          <GroupBody>
            <Column $w={21}>
              <Tool aria-label="剪切">{I.cut}</Tool>
              <Tool aria-label="复制">{I.copy}</Tool>
              <Tool aria-label="粘贴">{I.paste}</Tool>
            </Column>
            <SelectTool>
              <button aria-label="选择项"><Svg w={20} h={30}><path d="M3 2v20l5-4 5 9 3-2-4-8h5z" fill="#fff" stroke="#6a6e72" /></Svg></button>
              <button><span>选择</span><Caret /></button>
            </SelectTool>
          </GroupBody>
          <GroupName>操作<Caret /></GroupName>
        </Group>

        <Group $w={71}>
          <GroupBody>
            <Tools items={[["dline", "中心线", false, true], ["dpoint", "点"], ["dcsys", "坐标系", false, true]]} />
          </GroupBody>
          <GroupName>基准</GroupName>
        </Group>

        <Group $w={446}>
          <GroupBody $pad={0}>
            <BigTool $w={63}>
              <Svg s={32}><circle cx="20" cy="16" r="10" strokeDasharray="4 2" strokeWidth="1.6" /><path d="M3 2v28M11 2Q3 16 11 30M7 2v28" strokeDasharray="3 2" strokeWidth="1.2" /></Svg>
              构造模式
            </BigTool>
            <Rule $h={80} $after={9} />
            <Tools w={66} items={[["line", "线", true], ["rect", "矩形", true], ["circle", "圆", true]]} />
            <Tools w={66} items={[["arc", "弧", true], ["ellipse", "椭圆", true], ["spline", "样条"]]} />
            <Tools w={66} items={[["fillet", "圆角", true], ["chamfer", "倒角", true], ["text", "文本"]]} />
            <Tools w={52} items={[["offset", "偏移"], ["thicken", "加厚"], ["project", "投影"]]} />
            <Tools w={73} items={[["cline", "中心线", true], ["point", "点"], ["csys", "坐标系"]]} />
            <BigTool $w={46}>
              <Svg s={32}><path d="M2 2h23v22H2z" stroke="#5aa8cf" strokeWidth="1.8" /><path d="M7 30h24V7z" stroke="#5aa8cf" strokeWidth="1.8" fill="#f6f8fa" /></Svg>
              选项板
            </BigTool>
          </GroupBody>
          <GroupName>草绘</GroupName>
        </Group>

        <Group $w={159}>
          <GroupBody>
            <Tools w={52} items={[["modify", "修改"], ["mirror", "镜像", false, true], ["split", "分割"]]} />
            <Tools items={[["trim", "删除段"], ["corner", "拐角"], ["rotate", "旋转调整大小", false, true]]} />
          </GroupBody>
          <GroupName>编辑</GroupName>
        </Group>

        <Group $w={163}>
          <GroupBody>
            <Tools w={52} items={[["vert", "竖直"], ["horiz", "水平"], ["perp", "垂直"]]} />
            <Tools w={52} items={[["tangent", "相切"], ["mid", "中点"], ["coin", "重合"]]} />
            <Tools items={[["symm", "对称"], ["equal", "相等"], ["para", "平行"]]} />
          </GroupBody>
          <GroupName>约束<Caret /></GroupName>
        </Group>

        <Group $w={99}>
          <GroupBody $pad={3}>
            <BigTool $w={43}>
              <Svg s={32}><path d="M1 6v20M31 6v20" stroke="#8b9094" strokeWidth="1.6" /><path d="M6 12h20" strokeWidth="2.4" stroke="#33383a" /><path d="M2 12l7-5v10zM30 12l-7-5v10z" fill="#33383a" stroke="none" /></Svg>
              尺寸
            </BigTool>
            <Tools items={[["perim", "周长"], ["base", "基线"], ["ref", "参考"]]} />
          </GroupBody>
          <GroupName>尺寸<Caret /></GroupName>
        </Group>

        <Group $w={87}>
          <GroupBody $pad={3}>
            <BigTool $w={55}>
              <Svg s={32}><path d="M1 2h30M1 7h30M1 12h30M1 17h30M1 22h30M1 27h30M1 31h30" stroke="#8fb7cb" strokeDasharray="1.5 2.5" /><path d="M5 13l7-6h13v14l-7 7z" fill="#8cc8e3" stroke="none" /><path d="M5 13h13v14H5z" fill="#fff" stroke="#a9c8d6" /><path d="M12 25l6 5 11-10" strokeWidth="3.5" stroke="#3a3e42" /></Svg>
              特征要求
            </BigTool>
            <Column>
              <Toggle aria-label="突出显示开放端"><Svg s={16}><path d="M2 2h12v12H2z" stroke="#8b9094" strokeDasharray="2 2" /><path d="M5 4v9h9" stroke={BLUE} strokeWidth="1.6" /><path d="M1 1l14 14" strokeWidth="2" stroke="#2d6f93" /></Svg></Toggle>
              <Toggle $on aria-label="重叠几何"><Svg s={16}><path d="M0 2h16M0 14h16M0 8h16" stroke="#6fa7c3" strokeDasharray="2 2" /><path d="M2 8l5-5 4 4" stroke="#9a9da0" strokeWidth="1.6" /><circle cx="13" cy="9" r="2" stroke={BLUE} strokeWidth="1.6" /><circle cx="6" cy="12" r="2" stroke={BLUE} strokeWidth="1.6" /></Svg></Toggle>
              <Toggle $on aria-label="着色封闭环"><Svg s={16}><path d="M0 2h16M0 14h16M0 8h16" stroke="#6fa7c3" strokeDasharray="2 2" /><path d="M4 3h8v3h-2v4h2v3H4v-3h2V6H4z" fill="#8fe0f7" stroke="#1f6f96" strokeWidth="1.4" /></Svg></Toggle>
            </Column>
          </GroupBody>
          <GroupName>检查<Caret /></GroupName>
        </Group>

        <Group $w={87}>
          <GroupBody $pad={3}>
            <BigTool $w={40}>
              <Svg s={32}><path d="M3 18l4-3 5 5L26 7l4 1-17 19z" fill="#2f9140" stroke="#a3c93c" strokeWidth="1" /></Svg>
              确定
            </BigTool>
            <BigTool $w={39}>
              <Svg s={32}><path d="M7 10h5l4 4 4-4h5l-6 7 7 8h-5l-5-5-5 5H6l7-8z" fill="#3a3e42" stroke="none" /></Svg>
              取消
            </BigTool>
          </GroupBody>
          <GroupName>关闭</GroupName>
        </Group>
      </Ribbon>

      <Work>
        <Side>
          <SideTabs>
            <button><Svg s={16}><path d="M1 3h4l1 2h5v5H1zM5 8h4l1 2h5v5H5z" fill="#f6e3b0" stroke="#c49a50" /></Svg>文件</button>
            <button><Svg s={18}><path d="M1 3h6l1 2h9v11H1z" fill="#f9ecc6" stroke="#c49a50" /><path d="M9 7v6M6 10h6M7 8l4 4M11 8l-4 4" stroke="#2a6f98" /></Svg>收藏</button>
          </SideTabs>
          <SideTools>
            <Svg s={20}><path d="M2 3c4-2 7-1 9 1l-2 2H4z" fill="#55595c" /><path d="M5 6h4v13H5z" fill="#d4a257" stroke="#a67a38" /><path d="M15 1v9" strokeWidth="1.5" /><path d="M13 10h4v9h-4z" fill="#d4a257" stroke="#a67a38" /></Svg>
            <Caret />
            <Svg w={18} h={20}><path d="M2 1h10l4 4v14H2z" fill="#fafbfc" stroke="#85898c" /><path d="M5 8h1M5 11h1M5 14h1" strokeWidth="2" /><path d="M8 8h6M8 11h6M8 14h6" /></Svg>
            <Caret />
            <Svg s={20}><g stroke="#b4b7ba"><path d="M1 1h4v4H1zM1 8h4v4H1zM1 15h4v4H1z" /><path d="M8 1h4v4H8zM8 8h4v4H8zM15 1h4v8M5 10h3" strokeDasharray="2 1" /></g><path d="M10 15q5-6 9 0q-4 5-9 0zM11 11l8 8" stroke="#85898c" /></Svg>
          </SideTools>
          <SearchRow>
            <SearchBox>
              <input aria-label="搜索模型树" />
              <Svg s={9}><path d="M1 1l7 7M8 1L1 8" stroke="#94989b" /></Svg>
            </SearchBox>
            <Caret />
            <Svg w={32} h={12}><path d="M11 6h12M17 0v12" stroke="#85898c" strokeWidth="3" /></Svg>
          </SearchRow>
          <Tree>
            <Node $picked>{I.plane}<span /></Node>
            {TREE.map(([t, icon, off]) => (
              <Node key={t} $off={off}>{icon}<span>{t}</span></Node>
            ))}
            <InsertBar />
            <NewNode>
              <Solid />
              <Svg s={9}><path d="M4.5 0v9M0 4.5h9M1 1l7 7M8 1L1 8" stroke="#c9b500" strokeWidth="1.4" /></Svg>
              <span>拉伸 2</span>
            </NewNode>
          </Tree>
        </Side>
        <Canvas>
          <Model />
          <ViewBar>
            {VIEWS.map(([name, art]) => (
              <ViewButton key={name} aria-label={name} $on={name === "平面显示"}>
                <Svg s={35}>{art}</Svg>
              </ViewButton>
            ))}
          </ViewBar>
        </Canvas>
      </Work>

      <Status>
        <Svg w={20} h={20}><circle cx="10" cy="11" r="7" fill="#4f9ccb" stroke="#2d6f93" /><path d="M7 6c4-2 6 1 4 4s-5 2-6 0zM12 13l3-1-2 4z" fill="#d7ecf7" stroke="none" /><path d="M2 18C6 20 16 10 18 3" stroke="#8fb6cf" /></Svg>
        <Svg w={37} h={20}><path d="M9.5 4.5h14v14h-14z" fill="#e1eef6" stroke="#5d8097" /></Svg>
        <Rule />
        <Message><b>•</b>当约束处于活动状态时，可通过单击右键在锁定/禁用/启用约束之间切换。使用 Tab 键可切换活动约束。按住 Shift 键可禁用捕捉到新约束。</Message>
        <Rule $h={27} $after={40} />
        <Rule $h={27} />
        <Finder aria-label="查找">
          <Svg s={18}><path d="M3 4h4v3h4V4h4l2 12h-6v-4H7v4H1z" fill="#8b9094" stroke="none" /><path d="M3 1h4v3H3zM11 1h4v3h-4z" fill="#b4b8bb" stroke="none" /></Svg>
          <span><Caret c="#94989b" /></span>
        </Finder>
        <Rule $h={27} />
        <Filter aria-label="选择过滤器" defaultValue="all">
          <option value="all">所有草绘</option>
        </Filter>
      </Status>

      <Palette>
        <PaletteHead><span>金烛教鞭</span><i /></PaletteHead>
        <PaletteGrid>
          <Svg><path d="M3 14l8-8 2 2-8 8H3z" fill="#fff" stroke="#000" /><path d="M9 5l5 5M12 6l4-4" stroke="#000" strokeWidth="3" /><path d="M1 17h8" stroke="#e0301e" strokeWidth="2" /></Svg>
          <Svg><path d="M6 8l6-5 5 7-7 6z" fill="#e0301e" stroke="#000" /><path d="M2 14c-1-6 3-9 7-10" stroke="#e0301e" strokeWidth="3" /><path d="M10 1v7" stroke="#000" /></Svg>
          <Svg><path d="M3 3l12 12" stroke="#d9402e" /></Svg>
          <Svg><path d="M15 15L3 3M3 9V3h6" stroke="#d9402e" /></Svg>
          <Svg><ellipse cx="9" cy="9" rx="8" ry="5.5" stroke="#e0301e" /></Svg>
          <Svg><path d="M1 3h17v12H1z" fill="#fe1a00" stroke="none" /></Svg>
          <Svg><path d="M4 15V6l2-2h5l2 2v9M4 10h9" stroke="#fe1a00" strokeWidth="2.6" /></Svg>
          <Svg><path d="M2 14V7l2-2 2 2v7M2 11h4M10 14V5l3-2 3 2v9M10 10h6" stroke="#a3a3a3" strokeWidth="1.6" /></Svg>
          <Svg><path d="M1 2h16v11H1z" fill="#19d3e8" stroke="#000" /><path d="M4 4h9L5 11M7 6l6 5" stroke="#d9402e" /><path d="M4 16h11" stroke="#000" strokeWidth="3" /></Svg>
          <Svg><path d="M10 10l6 6" stroke="#000" strokeWidth="3" /><circle cx="7" cy="7" r="5.5" fill="#25d5ea" stroke="#087" /></Svg>
          <Svg><path d="M1 15V6h5l2 2h5v3" fill="#ffee88" stroke="#000" /><path d="M1 15l4-5h12l-4 5z" fill="#9c9438" stroke="#000" /><path d="M10 4c2-3 4-2 5 1" stroke="#000" /></Svg>
          <Svg><path d="M3 8l6-6 6 6M3 11l6 6 6-6" stroke="#e0604e" /></Svg>
        </PaletteGrid>
        <PaletteCombo>
          <button aria-label="线宽"><Caret c="#000" /></button>
          <button aria-label="颜色"><Swatch /><Caret c="#000" /></button>
        </PaletteCombo>
        <PaletteName>金烛软件</PaletteName>
      </Palette>
    </Shell>
  );
}
